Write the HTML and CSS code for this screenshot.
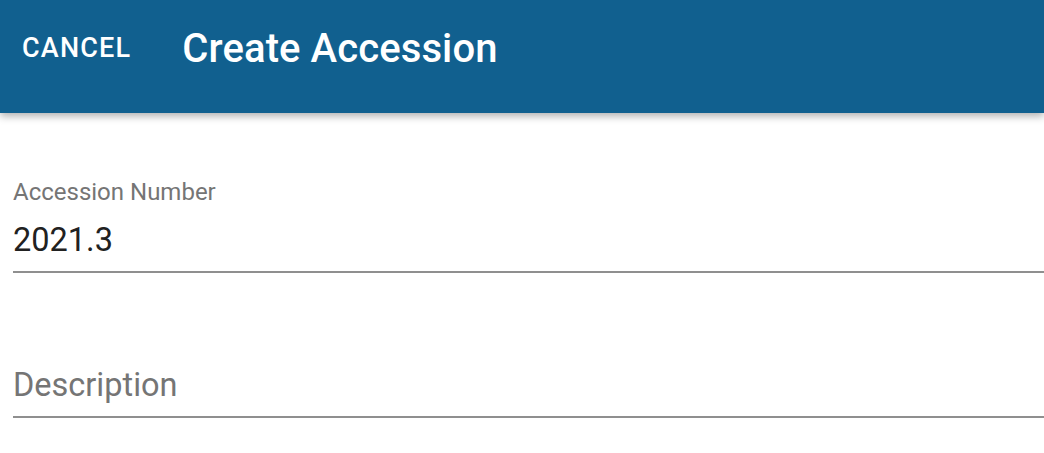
FILE: index.html
```html
<!DOCTYPE html>
<html lang="en">
<head>
<meta charset="utf-8">
<title>Create Accession</title>
<link rel="stylesheet" href="styles.css">
</head>
<body>
<header class="appbar">
  <button class="cancel" type="button">CANCEL</button>
  <h1 class="title">Create Accession</h1>
</header>
<main class="form">
  <div class="field">
    <label class="label" for="acc">Accession Number</label>
    <div class="value" id="acc">2021.3</div>
  </div>
  <div class="field field-empty">
    <div class="placeholder">Description</div>
  </div>
</main>
</body>
</html>
```

FILE: styles.css
```css
html, body {
  margin: 0;
  padding: 0;
  background: #ffffff;
}

body {
  font-family: Roboto, "Liberation Sans", sans-serif;
  width: 1044px;
  height: 453px;
  overflow: hidden;
}

.appbar {
  position: relative;
  z-index: 1;
  height: 113px;
  box-sizing: border-box;
  padding: 0 0 16px 0;
  display: flex;
  align-items: center;
  background: #11608f;
  box-shadow: 0 3px 8px rgba(0, 0, 0, 0.32);
  color: #ffffff;
}

.cancel {
  margin: 0 0 0 22px;
  padding: 0;
  border: 0;
  background: none;
  color: #ffffff;
  font-family: Roboto, "Liberation Sans", sans-serif;
  font-weight: 500;
  font-size: 27px;
  line-height: 1;
  letter-spacing: 1.2px;
}

.title {
  margin: 0 0 0 51px;
  font-weight: 500;
  font-size: 40px;
  line-height: 1;
  letter-spacing: 0.1px;
}

.form {
  padding: 67px 0 0 13px;
}

.field {
  border-bottom: 2px solid #8f8f8f;
}

.label {
  display: block;
  font-size: 24px;
  line-height: 1;
  color: #757575;
  margin-bottom: 20px;
}

.value {
  font-size: 32.5px;
  line-height: 1;
  color: #212121;
  padding-bottom: 14px;
}

.field-empty {
  margin-top: 96px;
}

.placeholder {
  font-size: 32.5px;
  line-height: 1;
  color: #757575;
  padding-bottom: 15px;
}
```
